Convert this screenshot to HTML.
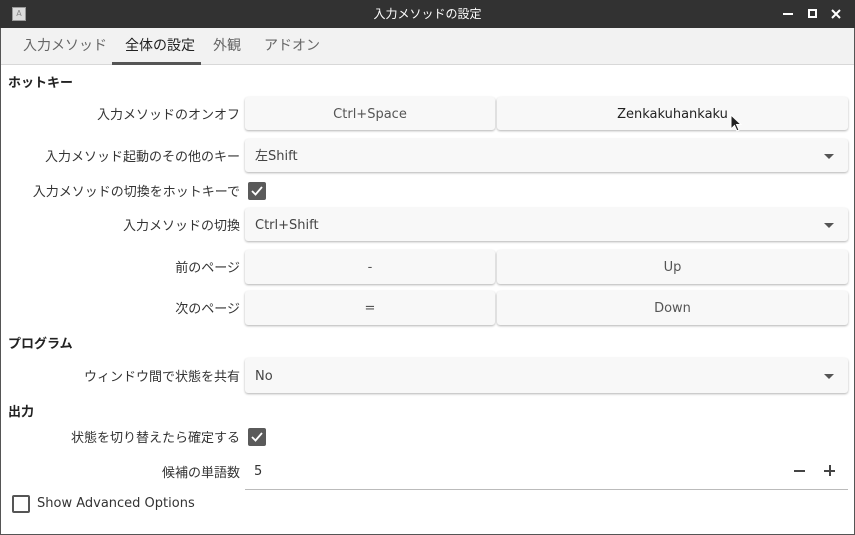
<!DOCTYPE html>
<html><head><meta charset="utf-8"><style>
*{box-sizing:border-box;margin:0;padding:0}
body{width:855px;height:535px;overflow:hidden;background:#fff;font-family:"DejaVu Sans","Noto Sans CJK JP",sans-serif;font-size:13px;color:#333;position:relative}
.abs{position:absolute}
.tb{left:0;top:0;width:855px;height:28px;background:#323232;color:#fff;text-align:center;line-height:28px;font-size:12px}
.tabs{left:0;top:28px;width:855px;height:37px;background:#f2f2f2;border-bottom:1px solid #d8d8d8}
.tab{position:absolute;top:0;height:36px;line-height:36px;color:#666;font-size:14px}
.frame{left:0;top:28px;width:855px;height:507px;border:1px solid #555;border-top:none;pointer-events:none}
.h{left:8px;font-weight:bold;font-size:13px;color:#222}
.lbl{right:615px;text-align:right;white-space:nowrap;color:#333}
.btn{background:#f8f8f8;border-radius:3px;box-shadow:0 1px 2px rgba(0,0,0,.3);text-align:center;color:#555;padding-top:1px}
.cmb{left:245px;width:603px;background:#f8f8f8;border-radius:3px;box-shadow:0 1px 2px rgba(0,0,0,.3);padding-left:10px;padding-top:1px;color:#444}
.arr{position:absolute;right:14px;top:50%;margin-top:-2px;border-left:5px solid transparent;border-right:5px solid transparent;border-top:5px solid #555}
.chk{width:18px;height:18px;background:#5a5a5a;border-radius:2px}
</style></head><body>
<div class="abs tb">入力メソッドの設定
<div class="abs" style="left:12px;top:7px;width:14px;height:14px;background:#ddd;border:1px solid #999;font-size:8px;line-height:12px;color:#888">A</div>
<div class="abs" style="left:783px;top:13px;width:10px;height:2px;background:#fff"></div>
<div class="abs" style="left:808px;top:9px;width:9px;height:9px;border:2px solid #fff"></div>
<svg class="abs" style="left:831px;top:9px" width="10" height="10"><path d="M1 1L9 9M9 1L1 9" stroke="#fff" stroke-width="2"/></svg>
</div>
<div class="abs tabs">
<div class="tab" style="left:23px">入力メソッド</div>
<div class="tab" style="left:125px;color:#222">全体の設定</div>
<div class="abs" style="left:112px;top:34px;width:89px;height:3px;background:#555"></div>
<div class="tab" style="left:213px">外観</div>
<div class="tab" style="left:264px">アドオン</div>
</div>
<div class="abs h" style="top:72px">ホットキー</div>
<div class="abs lbl" style="top:104px">入力メソッドのオンオフ</div>
<div class="abs btn" style="left:245px;top:97px;width:250px;height:33px;line-height:33px">Ctrl+Space</div>
<div class="abs btn" style="left:497px;top:97px;width:351px;height:33px;line-height:33px;color:#222">Zenkakuhankaku</div>
<svg class="abs" style="left:730px;top:114px" width="14" height="20"><path d="M1 1L1 15L4.5 11.5L7 17L9 16L6.5 10.5L11 10.5Z" fill="#222" stroke="#fff" stroke-width="1"/></svg>
<div class="abs lbl" style="top:146px">入力メソッド起動のその他のキー</div>
<div class="abs cmb" style="top:139px;height:33px;line-height:33px">左Shift<div class="arr"></div></div>
<div class="abs lbl" style="top:181px">入力メソッドの切換をホットキーで</div>
<div class="abs chk" style="left:248px;top:182px"><svg width="18" height="18"><path d="M4 9l3.5 3.5L14 5" stroke="#fff" stroke-width="1.8" fill="none"/></svg></div>
<div class="abs lbl" style="top:215px">入力メソッドの切換</div>
<div class="abs cmb" style="top:208px;height:33px;line-height:33px">Ctrl+Shift<div class="arr"></div></div>
<div class="abs lbl" style="top:257px">前のページ</div>
<div class="abs btn" style="left:245px;top:250px;width:250px;height:34px;line-height:34px">-</div>
<div class="abs btn" style="left:497px;top:250px;width:351px;height:34px;line-height:34px">Up</div>
<div class="abs lbl" style="top:298px">次のページ</div>
<div class="abs btn" style="left:245px;top:291px;width:250px;height:34px;line-height:34px">=</div>
<div class="abs btn" style="left:497px;top:291px;width:351px;height:34px;line-height:34px">Down</div>
<div class="abs h" style="top:333px">プログラム</div>
<div class="abs lbl" style="top:366px">ウィンドウ間で状態を共有</div>
<div class="abs cmb" style="top:358px;height:35px;line-height:35px">No<div class="arr"></div></div>
<div class="abs h" style="top:401px">出力</div>
<div class="abs lbl" style="top:427px">状態を切り替えたら確定する</div>
<div class="abs chk" style="left:248px;top:428px"><svg width="18" height="18"><path d="M4 9l3.5 3.5L14 5" stroke="#fff" stroke-width="1.8" fill="none"/></svg></div>
<div class="abs lbl" style="top:462px">候補の単語数</div>
<div class="abs" style="left:254px;top:464px">5</div>
<div class="abs" style="left:794px;top:470px;width:11px;height:2px;background:#444"></div>
<div class="abs" style="left:824px;top:470px;width:11px;height:2px;background:#444"></div>
<div class="abs" style="left:829px;top:465px;width:2px;height:11px;background:#444"></div>
<div class="abs" style="left:245px;top:489px;width:603px;height:1px;background:#bbb"></div>
<div class="abs" style="left:12px;top:495px;width:18px;height:18px;border:2px solid #555;border-radius:2px"></div>
<div class="abs" style="left:37px;top:496px;color:#333">Show Advanced Options</div>
<div class="abs frame"></div>
</body></html>
